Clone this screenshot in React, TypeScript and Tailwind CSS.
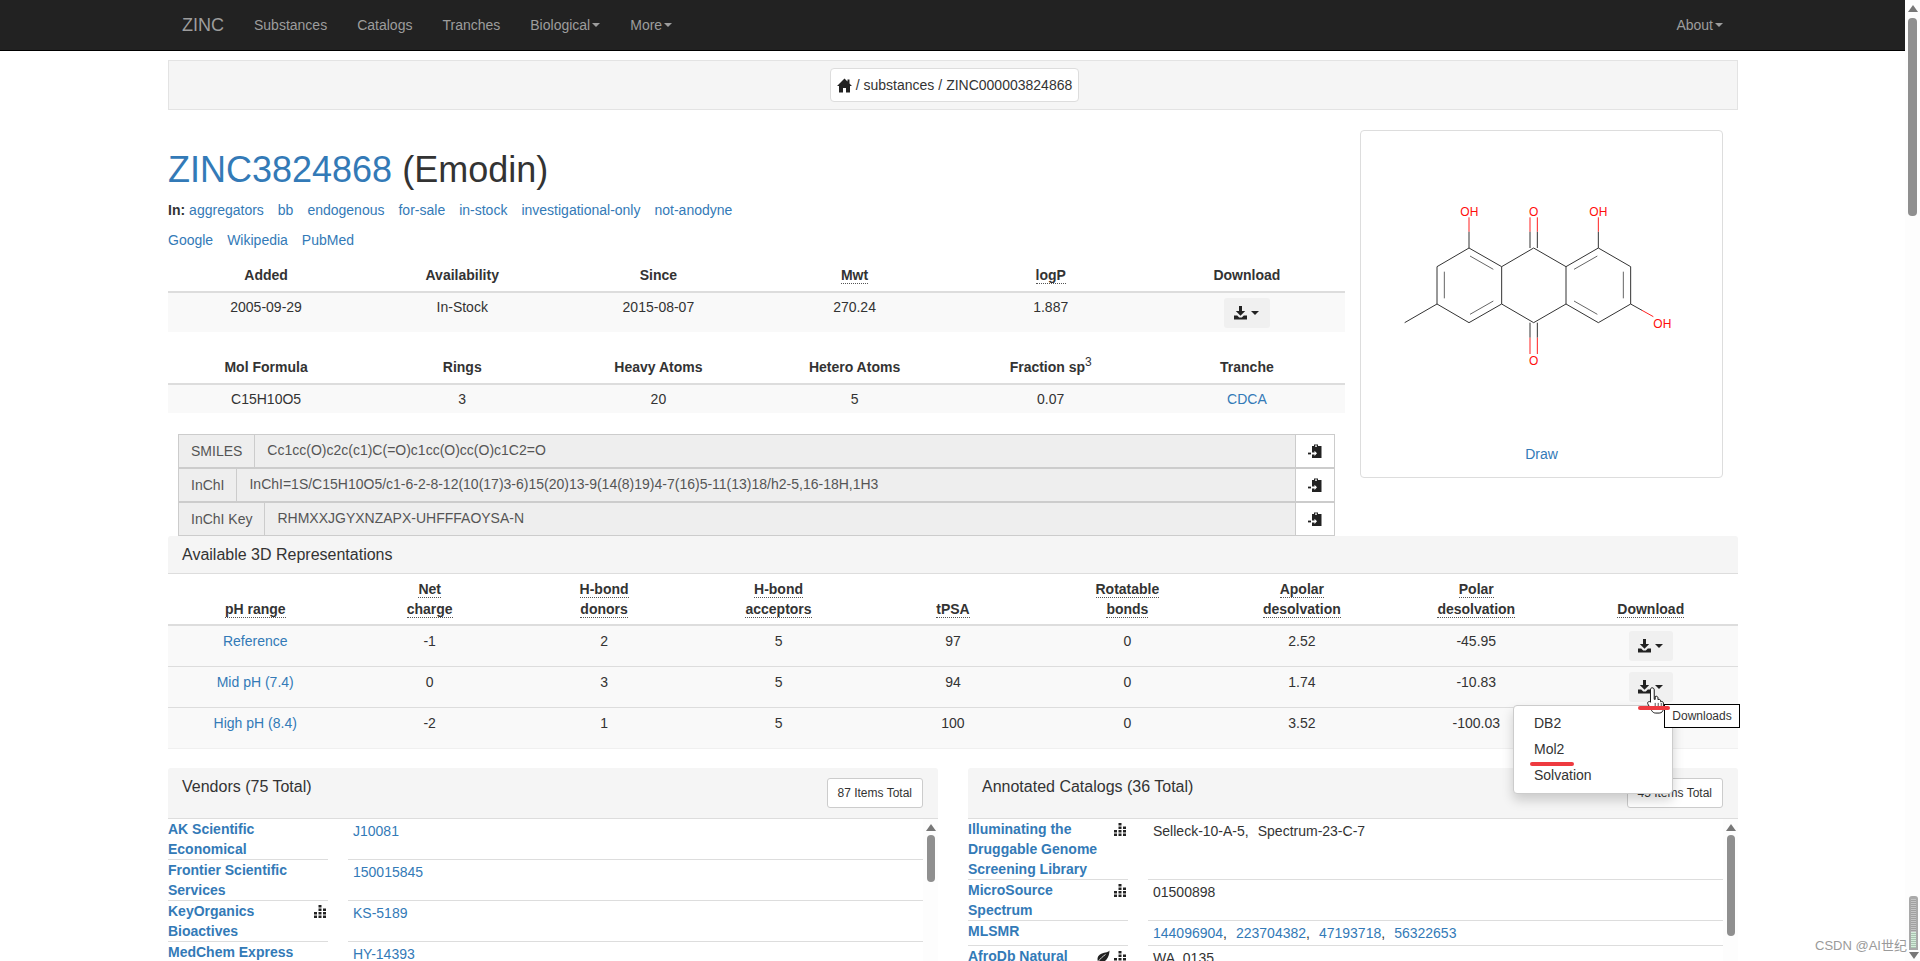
const LINK = "text-[#337ab7]";

const Caret = ({ className = "" }: { className?: string }) => (
  <span className={`inline-block w-0 h-0 border-x-[4px] border-x-transparent border-t-[4px] align-middle ${className}`} />
);

const HomeIcon = () => (
  <svg width="15" height="15" viewBox="0 0 15 15" fill="#222">
    <path d="M7.5 0.5L10.5 3.5V1.5H12.5V5.5L15 8H13V14.5H9V10H6V14.5H2V8H0z" />
  </svg>
);

const DownloadIcon = () => (
  <svg width="13" height="14" viewBox="0 0 13 14" className="text-[#222]" fill="currentColor">
    <path d="M5 0h3v5h3.2L6.5 9.8 1.8 5H5z" />
    <path d="M0 9.5h3.2l2 2h2.6l2-2H13V13.5H0z" />
  </svg>
);

const DownloadButton = ({ wide = false }: { wide?: boolean }) => (
  <div
    className={`mt-[5px] h-[30px] rounded-[3px] bg-[#f0f0f0] inline-flex items-center justify-center gap-[4px] ${
      wide ? "w-[46px]" : "w-[44px]"
    }`}
  >
    <DownloadIcon />
    <Caret className="border-t-[#222]" />
  </div>
);

const PasteIcon = () => (
  <svg width="14" height="14" viewBox="0 0 14 14" fill="#222">
    <path d="M4 2h2V0.5h4V2h3.5v12H4V10.5h2.5V12L9 9.3 6.5 6.7v1.8H4z" />
    <path d="M0 8.6h3v1.8H0z" />
    <path d="M7 2.8h2V1.5H7z" fill="#fff" />
  </svg>
);

const TasksIcon = () => (
  <svg width="14" height="13" viewBox="0 0 14 13" fill="#222">
    <path d="M5.5 0h3v2.5h-3zM5.5 3.5h3V6h-3zM10 3.5h3V6h-3zM1 7h3v2.5H1zM5.5 7h3v2.5h-3zM10 7h3v2.5h-3zM1 10.5h3V13H1zM5.5 10.5h3V13h-3zM10 10.5h3V13h-3z" />
  </svg>
);

const LeafIcon = () => (
  <svg width="15" height="15" viewBox="0 0 15 15">
    <path d="M14.5 0.5C13 3 8.5 2 5 4.5 2.5 6.3 2 9 3 11.5c3 1.5 6.5.7 8.5-2C13.5 7 14.5 3.5 14.5 0.5z" fill="#222" />
    <path d="M0.5 14.5C3 10.5 6 7.5 10.5 4.5" stroke="#222" strokeWidth="1" fill="none" />
    <path d="M3.5 11C5.5 8.5 7.5 6.7 10.5 4.5" stroke="#fff" strokeWidth="0.8" fill="none" />
  </svg>
);

const Abbr = ({ children }: { children: React.ReactNode }) => (
  <abbr className="no-underline border-b border-dotted border-[#555]">{children}</abbr>
);

const navItems: [string, boolean][] = [
  ["Substances", false],
  ["Catalogs", false],
  ["Tranches", false],
  ["Biological", true],
  ["More", true],
];

const inputRows = [
  ["SMILES", "Cc1cc(O)c2c(c1)C(=O)c1cc(O)cc(O)c1C2=O"],
  ["InChI", "InChI=1S/C15H10O5/c1-6-2-8-12(10(17)3-6)15(20)13-9(14(8)19)4-7(16)5-11(13)18/h2-5,16-18H,1H3"],
  ["InChI Key", "RHMXXJGYXNZAPX-UHFFFAOYSA-N"],
];

const repHeads: [string, string][] = [
  ["", "pH range"],
  ["Net", "charge"],
  ["H-bond", "donors"],
  ["H-bond", "acceptors"],
  ["", "tPSA"],
  ["Rotatable", "bonds"],
  ["Apolar", "desolvation"],
  ["Polar", "desolvation"],
];

const repRows = [
  ["Reference", "-1", "2", "5", "97", "0", "2.52", "-45.95"],
  ["Mid pH (7.4)", "0", "3", "5", "94", "0", "1.74", "-10.83"],
  ["High pH (8.4)", "-2", "1", "5", "100", "0", "3.52", "-100.03"],
];

type Row = { name: string[]; icons?: ("tasks" | "leaf")[]; values: string[]; plain?: boolean };

const vendors: Row[] = [
  { name: ["AK Scientific", "Economical"], values: ["J10081"] },
  { name: ["Frontier Scientific", "Services"], values: ["150015845"] },
  { name: ["KeyOrganics", "Bioactives"], icons: ["tasks"], values: ["KS-5189"] },
  { name: ["MedChem Express", ""], values: ["HY-14393"] },
];

const catalogs: Row[] = [
  {
    name: ["Illuminating the", "Druggable Genome", "Screening Library"],
    icons: ["tasks"],
    values: ["Selleck-10-A-5", "Spectrum-23-C-7"],
    plain: true,
  },
  { name: ["MicroSource", "Spectrum"], icons: ["tasks"], values: ["01500898"], plain: true },
  { name: ["MLSMR"], values: ["144096904", "223704382", "47193718", "56322653"] },
  { name: ["AfroDb Natural", "Products"], icons: ["leaf", "tasks"], values: ["WA_0135"], plain: true },
];

const ScrollArrow = ({ down = false }: { down?: boolean }) => (
  <span
    className={`block w-0 h-0 border-x-[5px] border-x-transparent ${
      down ? "border-t-[7px] border-t-[#777]" : "border-b-[7px] border-b-[#777]"
    }`}
  />
);

function CatalogPanel({ title, total, rows, thumb }: { title: string; total: string; rows: Row[]; thumb: string }) {
  return (
    <div className="w-[770px]">
      <div className="h-[51px] bg-[#f5f5f5] border-b border-[#ddd] rounded-t-[3px] flex justify-between pl-[14px] pr-[15px]">
        <div className="mt-[9px] text-[16px] leading-[20px]">{title}</div>
        <div className="mt-[10px] h-[30px] px-[10px] bg-white border border-[#ccc] rounded-[3px] text-[12px] leading-[28px]">
          {total}
        </div>
      </div>
      <div className="flex h-[160px] overflow-hidden">
        <div className="w-[755px]">
          {rows.map((r) => (
            <div key={r.name[0]} className="flex">
              <div className="w-[160px] border-b border-[#ddd] flex justify-between items-start">
                <div className={`font-bold ${LINK}`}>
                  {r.name.map((n) => (
                    <div key={n} className="h-[20px]">{n}</div>
                  ))}
                </div>
                <div className="flex items-center gap-[3px] mt-[4px] mr-[1px]">
                  {r.icons?.map((ic) => (ic === "tasks" ? <TasksIcon key={ic} /> : <LeafIcon key={ic} />))}
                </div>
              </div>
              <div className="ml-[20px] flex-1 border-b border-[#ddd] pl-[5px] pt-[2px] pb-[2px] flex gap-[9px]">
                {r.values.map((v, i) => (
                  <span key={v} className={r.plain ? "" : LINK}>
                    {v}
                    {i < r.values.length - 1 && <span className="text-[#333]">,</span>}
                  </span>
                ))}
              </div>
            </div>
          ))}
        </div>
        <div className="w-[15px] flex flex-col items-center bg-[#fdfdfd] pt-[5px]">
          <ScrollArrow />
          <div className={`mt-[4px] w-[8px] rounded-[4px] bg-[#8f8f8f] ${thumb}`} />
        </div>
      </div>
    </div>
  );
}

export default function App() {
  return (
    <div className="relative w-[1920px] h-[961px] overflow-hidden flex bg-white text-[14px] leading-[20px] text-[#333] font-['Liberation_Sans',sans-serif]">
      <div className="w-[1905px] shrink-0">
        <nav className="h-[51px] bg-[#222] border-b border-black pl-[167px] pr-[167px] flex items-center text-[#9d9d9d]">
          <span className="px-[15px] text-[18px]">ZINC</span>
          {navItems.map(([label, caret]) => (
            <span key={label} className="px-[15px] flex items-center gap-[2px]">
              {label}
              {caret && <Caret className="border-t-[#9d9d9d]" />}
            </span>
          ))}
          <span className="ml-auto px-[15px] flex items-center gap-[2px]">
            About
            <Caret className="border-t-[#9d9d9d]" />
          </span>
        </nav>

        <div className="mx-[168px] w-[1570px]">
          <div className="mt-[9px] h-[50px] bg-[#f5f5f5] border border-[#e3e3e3] flex items-center justify-center">
            <div className="ml-[3px] h-[34px] px-[6px] bg-white border border-[#ddd] rounded-[4px] flex items-center gap-[4px]">
              <HomeIcon />
              <span>/ substances</span>
              <span>/ ZINC000003824868</span>
            </div>
          </div>

          <div className="flex items-start">
            <div className="w-[1177px]">
              <h1 className="mt-[40px] text-[36px] leading-[40px]">
                <span className={LINK}>ZINC3824868</span> (Emodin)
              </h1>
              <div className={`mt-[10px] flex gap-[14px] ${LINK}`}>
                <span>
                  <b className="text-[#333] mr-[4px]">In:</b>aggregators
                </span>
                {["bb", "endogenous", "for-sale", "in-stock", "investigational-only", "not-anodyne"].map((t) => (
                  <span key={t}>{t}</span>
                ))}
              </div>
              <div className={`mt-[10px] flex gap-[14px] ${LINK}`}>
                <span>Google</span>
                <span>Wikipedia</span>
                <span>PubMed</span>
              </div>

              <table className="mt-[15px] w-full table-fixed text-center">
                <thead>
                  <tr className="h-[27px] border-b-2 border-[#ddd]">
                    <th className="align-top">Added</th>
                    <th className="align-top">Availability</th>
                    <th className="align-top">Since</th>
                    <th className="align-top"><Abbr>Mwt</Abbr></th>
                    <th className="align-top"><Abbr>logP</Abbr></th>
                    <th className="align-top">Download</th>
                  </tr>
                </thead>
                <tbody>
                  <tr className="h-[40px] bg-[#f9f9f9]">
                    {["2005-09-29", "In-Stock", "2015-08-07", "270.24", "1.887"].map((v) => (
                      <td key={v} className="align-top pt-[4px]">{v}</td>
                    ))}
                    <td className="align-top"><DownloadButton wide /></td>
                  </tr>
                </tbody>
              </table>

              <table className="mt-[25px] w-full table-fixed text-center">
                <thead>
                  <tr className="h-[27px] border-b-2 border-[#ddd]">
                    <th className="align-top">Mol Formula</th>
                    <th className="align-top">Rings</th>
                    <th className="align-top">Heavy Atoms</th>
                    <th className="align-top">Hetero Atoms</th>
                    <th className="align-top">
                      Fraction sp<sup className="font-normal text-[12px]">3</sup>
                    </th>
                    <th className="align-top">Tranche</th>
                  </tr>
                </thead>
                <tbody>
                  <tr className="h-[29px] bg-[#f9f9f9]">
                    {["C15H10O5", "3", "20", "5", "0.07"].map((v) => (
                      <td key={v} className="align-top pt-[4px]">{v}</td>
                    ))}
                    <td className={`align-top pt-[4px] ${LINK}`}>CDCA</td>
                  </tr>
                </tbody>
              </table>

              <div className="mt-[21px] mx-[10px]">
                {inputRows.map(([label, value]) => (
                  <div key={label} className="flex h-[34px] text-[#555]">
                    <div className="px-[12px] bg-[#eee] border border-[#ccc] leading-[33px]">{label}</div>
                    <div className="flex-1 px-[12px] bg-[#eee] border-y border-[#ccc] leading-[30px]">{value}</div>
                    <div className="w-[40px] bg-white border border-[#ccc] flex items-center justify-center">
                      <PasteIcon />
                    </div>
                  </div>
                ))}
              </div>
            </div>

            <div className="mt-[20px] ml-[15px] w-[363px] h-[348px] border border-[#ddd] rounded-[4px] bg-white">
              <svg width="320" height="200" viewBox="0 0 960 600" className="mt-[49px] ml-[19px]" fill="none" strokeWidth="3">
                <g stroke="#333">
                  <path d="M267 204L171 260V372L267 428L365 372V260ZM365 260L461 204L558 260V372L461 428L365 372M558 260L655 204L752 260V372L655 428L558 372M171 372L74 428" />
                  <path d="M270 228L340 268M193 275V355M270 403L340 363M582 268L652 228M730 275V355M582 363L652 403" stroke="#666" />
                  <path d="M267 204V155M655 204V155M450 204V155M472 204V155M450 428V473M472 428V473M752 372L786 391" />
                </g>
                <path d="M267 155V112M655 155V112M450 155V112M472 155V112M450 473V522M472 473V522M786 391L820 410" stroke="#ff2020" />
                <g fill="#ff0d0d" fontSize="36" textAnchor="middle" fontFamily="'Liberation Sans', sans-serif">
                  <text x="268" y="108">OH</text>
                  <text x="461" y="108">O</text>
                  <text x="655" y="108">OH</text>
                  <text x="847" y="444">OH</text>
                  <text x="461" y="555">O</text>
                </g>
              </svg>
              <div className={`mt-[64px] text-center ${LINK}`}>Draw</div>
            </div>
          </div>

          <div className="h-[38px] bg-[#f5f5f5] border-b border-[#ddd] rounded-t-[3px] pl-[14px] pt-[9px] text-[16px] leading-[20px]">
            Available 3D Representations
          </div>
          <table className="w-full table-fixed text-center">
            <thead>
              <tr className="h-[51px] border-b-2 border-[#ddd]">
                {repHeads.map(([a, b]) => (
                  <th key={a + b} className="align-bottom pb-[5px]">
                    {a && <div><Abbr>{a}</Abbr></div>}
                    <div><Abbr>{b}</Abbr></div>
                  </th>
                ))}
                <th className="align-bottom pb-[5px]"><Abbr>Download</Abbr></th>
              </tr>
            </thead>
            <tbody>
              {repRows.map((row, i) => (
                <tr key={row[0]} className="h-[41px] bg-[#f9f9f9] border-b border-[#ddd] last:border-[#f0f0f0]">
                  {row.map((v, j) => (
                    <td key={j} className={`align-top pt-[5px] ${j === 0 ? LINK : ""}`}>{v}</td>
                  ))}
                  <td className="align-top">{i < 2 && <DownloadButton />}</td>
                </tr>
              ))}
            </tbody>
          </table>

          <div className="mt-[19px] flex gap-[30px]">
            <CatalogPanel title="Vendors (75 Total)" total="87 Items Total" rows={vendors} thumb="h-[47px]" />
            <CatalogPanel title="Annotated Catalogs (36 Total)" total="45 Items Total" rows={catalogs} thumb="h-[101px]" />
          </div>
        </div>
      </div>

      <div className="relative w-[15px] bg-[#fdfdfd] flex flex-col items-center pt-[5px]">
        <ScrollArrow />
        <div className="mt-[6px] w-[9px] h-[198px] rounded-[4px] bg-[#8f8f8f]" />
        <div className="absolute left-[4px] top-[896px] w-[9px] h-[54px] rounded-t-[3px] bg-[#a9a9a9] flex justify-center pt-[3px]">
          <div className="w-[5px] h-[49px] bg-[repeating-linear-gradient(to_bottom,#c4c4c4_0,#c4c4c4_1px,#a0a0a0_1px,#a0a0a0_2px)]" />
        </div>
        <div className="absolute left-[6px] top-[932px] w-[5px] h-[16px] bg-[repeating-linear-gradient(to_bottom,#d5eddb_0,#d5eddb_1px,#a9c4b0_1px,#a9c4b0_2px)]" />
        <div className="absolute left-[4px] top-[952px]">
          <ScrollArrow down />
        </div>
      </div>

      {/* open downloads menu */}
      <div className="absolute left-[1513px] top-[705px] w-[160px] h-[89px] bg-white border border-[#ccc] rounded-b-[4px] rounded-tl-[4px] shadow-[0_6px_12px_rgba(0,0,0,0.175)] pt-[6px] pl-[20px]">
        <div className="h-[26px] leading-[22px]">DB2</div>
        <div className="h-[26px] leading-[22px]">Mol2</div>
        <div className="h-[26px] leading-[22px]">Solvation</div>
      </div>
      <div className="absolute left-[1530px] top-[762px] w-[44px] h-[4px] rounded-[2px] bg-[#ee3a40]" />

      <div className="absolute left-[1664px] top-[704px] w-[76px] h-[24px] bg-white border border-black text-[12px] leading-[22px] text-center">
        Downloads
      </div>

      <svg width="22" height="29" viewBox="0 0 18 24" className="absolute left-[1646px] top-[686px]">
        <path
          d="M5 1.5c1 0 1.7.7 1.7 1.7V11l.8.1V8.7c1.2-.6 2.2 0 2.3 1v1.6c1.1-.6 2.1-.1 2.2.9v.8c1.1-.5 2.2 0 2.3 1v4.5c0 2.2-1.3 3.9-3.5 3.9H8c-1.6 0-2.6-.8-3.4-2L1.5 15c-.9-1.5.8-2.8 2-1.7l.1.1V3.2c0-1 .4-1.7 1.4-1.7z"
          fill="#fff"
          stroke="#111"
          strokeWidth="0.8"
        />
        <path d="M7.5 14v5M10 14v5M12.5 14v5" stroke="#111" strokeWidth="0.6" />
      </svg>
      <div className="absolute left-[1638px] top-[706px] w-[32px] h-[4px] rounded-[2px] bg-[#ee3a40]" />

      <div className="absolute left-[1815px] top-[936px] text-[13px] text-[#9a9a9a] font-['Liberation_Sans','Noto_Sans_CJK_SC',sans-serif]">
        CSDN @AI世纪
      </div>
    </div>
  );
}
